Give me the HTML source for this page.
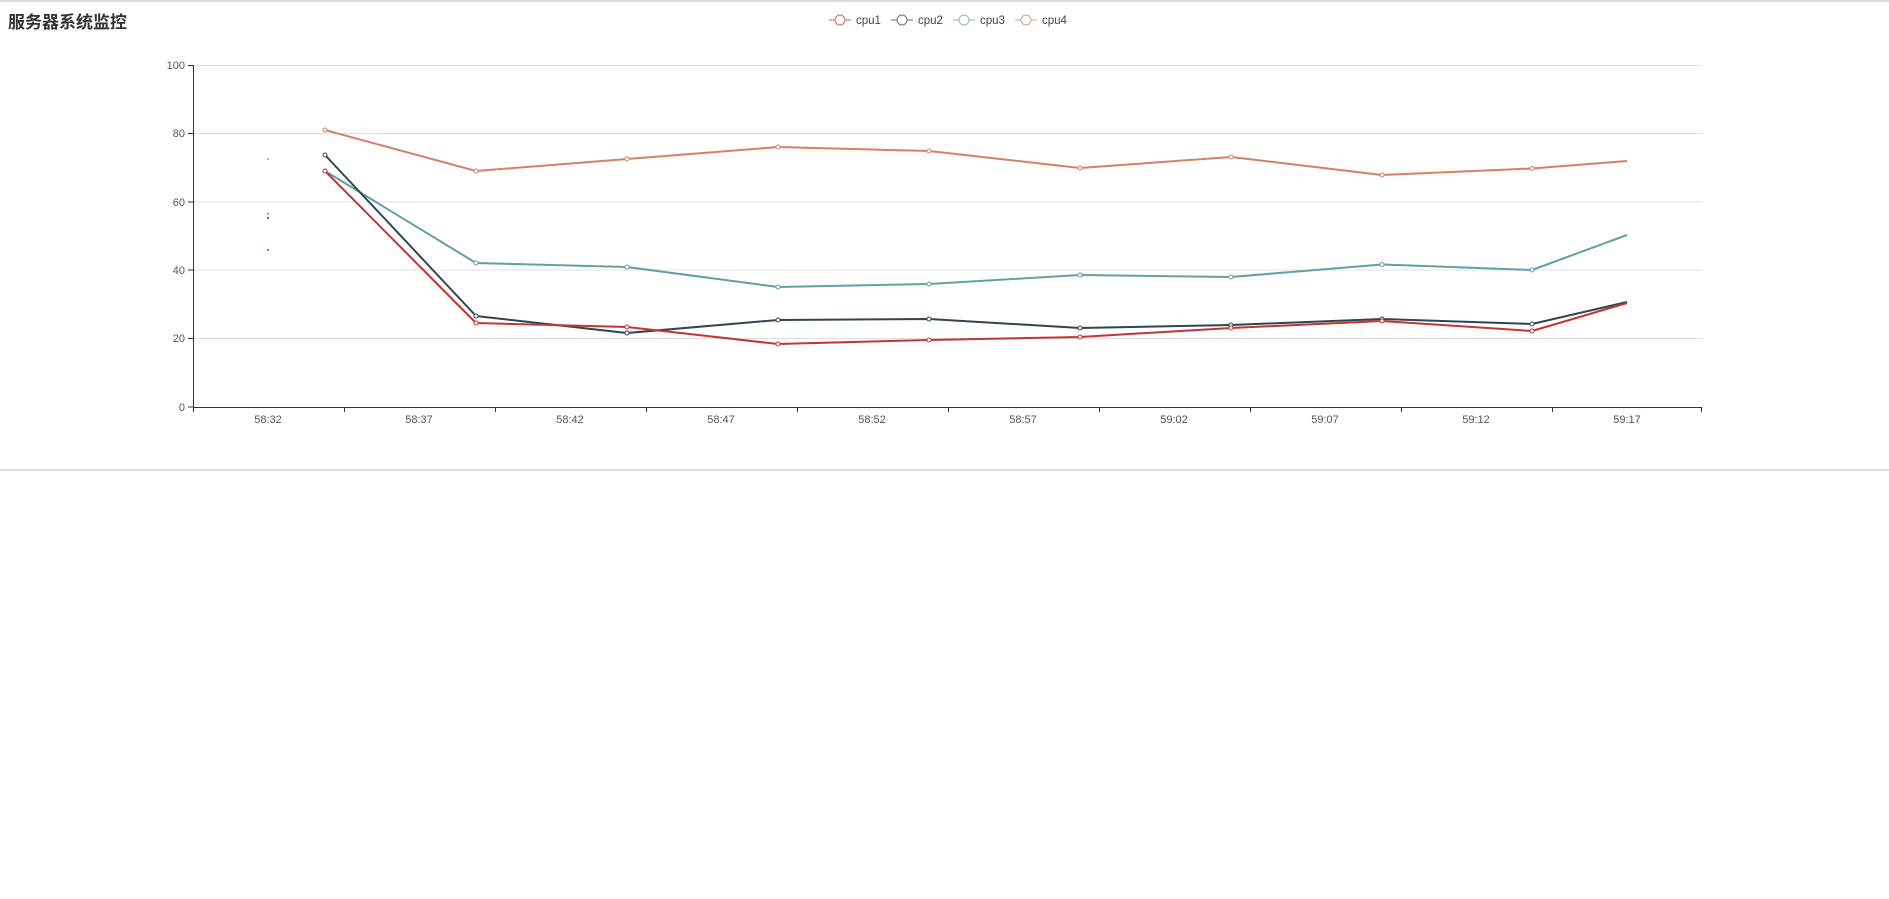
<!DOCTYPE html>
<html><head><meta charset="utf-8"><style>
html,body{margin:0;padding:0;background:#fff;width:1889px;height:899px;overflow:hidden}
svg{display:block}
text{font-family:"Liberation Sans","Noto Sans CJK SC",sans-serif}
</style></head><body>
<svg width="1889" height="899" viewBox="0 0 1889 899">
<line x1="0" y1="1" x2="1889" y2="1" stroke="#d0d0d0" stroke-width="1.5"/>
<line x1="0" y1="470" x2="1889" y2="470" stroke="#d0d0d0" stroke-width="1.5"/>
<text x="8" y="28" font-size="17" font-weight="bold" fill="#333">服务器系统监控</text>
<!-- legend -->
<g font-size="11.5" fill="#444">
<g stroke="#c23531" fill="none" stroke-width="1" opacity="0.75"><line x1="829" y1="20" x2="851" y2="20"/><circle cx="840" cy="20" r="5" fill="#fff"/></g>
<text x="856" y="24">cpu1</text>
<g stroke="#2f4554" fill="none" stroke-width="1" opacity="0.75"><line x1="891" y1="20" x2="913" y2="20"/><circle cx="902" cy="20" r="5" fill="#fff"/></g>
<text x="918" y="24">cpu2</text>
<g stroke="#61a0a8" fill="none" stroke-width="1" opacity="0.75"><line x1="953" y1="20" x2="975" y2="20"/><circle cx="964" cy="20" r="5" fill="#fff"/></g>
<text x="980" y="24">cpu3</text>
<g stroke="#d48265" fill="none" stroke-width="1" opacity="0.75"><line x1="1015" y1="20" x2="1037" y2="20"/><circle cx="1026" cy="20" r="5" fill="#fff"/></g>
<text x="1042" y="24">cpu4</text>
</g>
<!-- grid -->
<g stroke="#e0e0e0" stroke-width="1">
<line x1="193" y1="65.5" x2="1702" y2="65.5"/>
<line x1="193" y1="133.5" x2="1702" y2="133.5"/>
<line x1="193" y1="202" x2="1702" y2="202"/>
<line x1="193" y1="270" x2="1702" y2="270"/>
<line x1="193" y1="338.5" x2="1702" y2="338.5"/>
</g>
<g stroke="#333" stroke-width="1">
<line x1="193.5" y1="65" x2="193.5" y2="407"/>
<line x1="188" y1="65.5" x2="193" y2="65.5"/><line x1="188" y1="133.5" x2="193" y2="133.5"/><line x1="188" y1="202" x2="193" y2="202"/><line x1="188" y1="270" x2="193" y2="270"/><line x1="188" y1="338.5" x2="193" y2="338.5"/><line x1="188" y1="407" x2="193" y2="407"/>
<line x1="193" y1="407.5" x2="1702" y2="407.5"/>
<line x1="193.5" y1="407" x2="193.5" y2="412"/><line x1="344.5" y1="407" x2="344.5" y2="412"/><line x1="495.5" y1="407" x2="495.5" y2="412"/><line x1="646.5" y1="407" x2="646.5" y2="412"/><line x1="797.5" y1="407" x2="797.5" y2="412"/><line x1="948.5" y1="407" x2="948.5" y2="412"/><line x1="1099.5" y1="407" x2="1099.5" y2="412"/><line x1="1250.5" y1="407" x2="1250.5" y2="412"/><line x1="1401.5" y1="407" x2="1401.5" y2="412"/><line x1="1552.5" y1="407" x2="1552.5" y2="412"/><line x1="1701.5" y1="407" x2="1701.5" y2="412"/>
</g>
<g font-size="11" fill="#555" text-anchor="end">
<text x="185" y="69">100</text><text x="185" y="137">80</text><text x="185" y="206">60</text><text x="185" y="274">40</text><text x="185" y="342">20</text><text x="185" y="411">0</text>
</g>
<g font-size="11" fill="#555" text-anchor="middle">
<text x="268" y="423">58:32</text><text x="419" y="423">58:37</text><text x="570" y="423">58:42</text><text x="721" y="423">58:47</text><text x="872" y="423">58:52</text><text x="1023" y="423">58:57</text><text x="1174" y="423">59:02</text><text x="1325" y="423">59:07</text><text x="1476" y="423">59:12</text><text x="1627" y="423">59:17</text>
</g>
<!-- stray dots -->
<circle cx="268" cy="159" r="1" fill="#d48265"/><circle cx="268" cy="214" r="1" fill="#61a0a8"/><circle cx="268" cy="218" r="1" fill="#2f4554"/><circle cx="268" cy="250" r="1" fill="#c23531"/>
<!-- series -->
<g fill="none" stroke-width="2" stroke-linejoin="round">
<polyline stroke="#d48265" points="325,130 476,171 627,159 778,147 929,151 1080,168 1231,157 1382,175 1532,168.5 1627,161"/>
<polyline stroke="#61a0a8" points="325,171 476,263 627,267 778,287 929,284 1080,275 1231,277 1382,264.5 1532,270 1627,235"/>
<polyline stroke="#2f4554" points="325,155 476,316 627,333 778,320 929,319 1080,328 1231,325 1382,319 1532,324 1627,302"/>
<polyline stroke="#c23531" points="325,171 476,323 627,327 778,344 929,340 1080,337 1231,328 1382,321 1532,331 1627,303"/>
</g>
<g fill="#fff" stroke-width="1">
<g stroke="#d48265"><circle cx="325" cy="130" r="2"/><circle cx="476" cy="171" r="2"/><circle cx="627" cy="159" r="2"/><circle cx="778" cy="147" r="2"/><circle cx="929" cy="151" r="2"/><circle cx="1080" cy="168" r="2"/><circle cx="1231" cy="157" r="2"/><circle cx="1382" cy="175" r="2"/><circle cx="1532" cy="168.5" r="2"/></g>
<g stroke="#61a0a8"><circle cx="325" cy="171" r="2"/><circle cx="476" cy="263" r="2"/><circle cx="627" cy="267" r="2"/><circle cx="778" cy="287" r="2"/><circle cx="929" cy="284" r="2"/><circle cx="1080" cy="275" r="2"/><circle cx="1231" cy="277" r="2"/><circle cx="1382" cy="264.5" r="2"/><circle cx="1532" cy="270" r="2"/></g>
<g stroke="#2f4554"><circle cx="325" cy="155" r="2"/><circle cx="476" cy="316" r="2"/><circle cx="627" cy="333" r="2"/><circle cx="778" cy="320" r="2"/><circle cx="929" cy="319" r="2"/><circle cx="1080" cy="328" r="2"/><circle cx="1231" cy="325" r="2"/><circle cx="1382" cy="319" r="2"/><circle cx="1532" cy="324" r="2"/></g>
<g stroke="#c23531"><circle cx="325" cy="171" r="2"/><circle cx="476" cy="323" r="2"/><circle cx="627" cy="327" r="2"/><circle cx="778" cy="344" r="2"/><circle cx="929" cy="340" r="2"/><circle cx="1080" cy="337" r="2"/><circle cx="1231" cy="328" r="2"/><circle cx="1382" cy="321" r="2"/><circle cx="1532" cy="331" r="2"/></g>
</g>
</svg>
</body></html>
